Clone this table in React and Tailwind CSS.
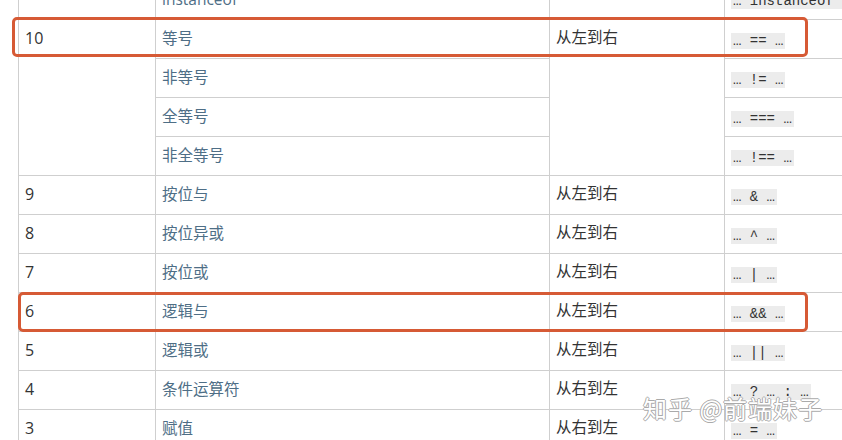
const rows = [
  { prec: "10", precSpan: 4, name: "等号", assoc: "从左到右", assocSpan: 4, code: "… == …" },
  { name: "非等号", code: "… != …" },
  { name: "全等号", code: "… === …" },
  { name: "非全等号", code: "… !== …" },
  { prec: "9", name: "按位与", assoc: "从左到右", code: "… & …" },
  { prec: "8", name: "按位异或", assoc: "从左到右", code: "… ^ …" },
  { prec: "7", name: "按位或", assoc: "从左到右", code: "… | …" },
  { prec: "6", name: "逻辑与", assoc: "从左到右", code: "… && …" },
  { prec: "5", name: "逻辑或", assoc: "从左到右", code: "… || …" },
  { prec: "4", name: "条件运算符", assoc: "从右到左", code: "… ? … : …" },
  { prec: "3", name: "赋值", assoc: "从右到左", code: "… = …" },
];

const cell = "border border-[#cfcfcf] px-[6px] h-[39px] leading-[20px] whitespace-nowrap";

function Code({ children }) {
  return (
    <code className="bg-[#ececec] text-[#333] px-[2px] text-[14px] leading-[16px] whitespace-pre font-['Liberation_Mono',monospace]">
      {children}
    </code>
  );
}

export default function App() {
  return (
    <div className="relative w-[842px] h-[440px] overflow-hidden bg-white text-[15.5px] text-[#333] font-['Open_Sans','Noto_Sans_CJK_SC',sans-serif]">
      <table className="ml-[18px] -mt-[20px] w-[900px] border-collapse table-fixed">
        <colgroup>
          <col className="w-[137px]" />
          <col className="w-[394px]" />
          <col className="w-[175px]" />
          <col />
        </colgroup>
        <tbody>
          <tr>
            <td className={`${cell} align-middle pb-[3px]`}></td>
            <td className={`${cell} align-middle pb-[3px] text-[#4e6e86]`}>instanceof</td>
            <td className={`${cell} align-middle pb-[3px]`}></td>
            <td className={`${cell} align-middle pb-[3px]`}>
              <Code>… instanceof …</Code>
            </td>
          </tr>
          {rows.map((r, i) => (
            <tr key={i}>
              {r.prec && (
                <td rowSpan={r.precSpan || 1} className={`${cell} align-top pt-[8px] text-[16px]`}>
                  {r.prec}
                </td>
              )}
              <td className={`${cell} align-middle pb-[3px] text-[#4e6e86]`}>{r.name}</td>
              {r.assoc && (
                <td rowSpan={r.assocSpan || 1} className={`${cell} align-top pt-[7px]`}>
                  {r.assoc}
                </td>
              )}
              <td className={`${cell} align-middle pb-[1px]`}>
                <Code>{r.code}</Code>
              </td>
            </tr>
          ))}
        </tbody>
      </table>

      {/* highlight boxes */}
      <div className="absolute left-[12px] top-[17px] w-[796px] h-[40px] border-[3px] border-[#d65a35] rounded-[5px]" />
      <div className="absolute left-[18px] top-[292px] w-[790px] h-[40px] border-[3px] border-[#d65a35] rounded-[5px]" />

      {/* watermark */}
      <div className="absolute left-[643px] top-[393px] text-[24px] leading-[30px] tracking-[1px] text-white font-['Noto_Sans_CJK_SC',sans-serif] [text-shadow:1px_0_0_#aaa,-1px_0_0_#aaa,0_1px_0_#aaa,0_-1px_0_#aaa]">
        知乎 @前端妹子
      </div>
    </div>
  );
}
